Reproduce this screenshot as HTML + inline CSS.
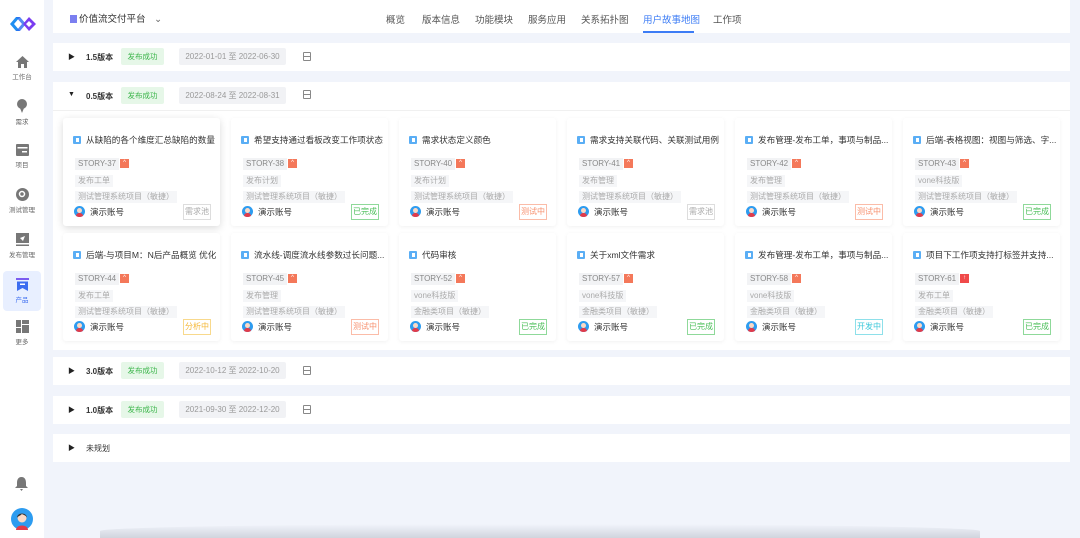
<!DOCTYPE html>
<html><head><meta charset="utf-8"><style>
*{margin:0;padding:0;box-sizing:border-box}
body{width:1080px;height:538px;overflow:hidden;background:#f1f4fb;font-family:"Liberation Sans","Noto Sans CJK SC",sans-serif;position:relative;color:#333}
.a{position:absolute}
.side{left:0;top:0;width:44px;height:538px;background:#fff}
.nav{position:absolute;left:0;width:44px;text-align:center;font-size:6.5px;color:#666}
.nav svg{display:block;margin:0 auto 3px}
.hdr{left:53px;top:0;width:1017px;height:33px;background:#fff}
.tab{position:absolute;top:12px;font-size:9.5px;color:#555}
.row{left:53px;width:1017px;background:#fff}
.tri{position:absolute;left:15px;font-size:7px;color:#222}
.ver{position:absolute;left:33px;font-size:8px;font-weight:bold;color:#333}
.ok{position:absolute;left:68px;width:43px;height:17px;background:#e6f7e8;color:#3bb54a;font-size:7.5px;line-height:17px;text-align:center;border-radius:2px}
.dt{position:absolute;left:126px;width:107px;height:17px;background:#f1f2f5;color:#999;font-size:8px;line-height:17px;text-align:center;border-radius:2px}
.ic{position:absolute;left:250px;width:8px;height:9px;border:1.2px solid #888;border-radius:1px}
.ic:after{content:"";position:absolute;left:0;right:0;top:3px;border-top:1.2px solid #888}
.card{position:absolute;width:157px;height:108px;background:#fff;border-radius:3px;box-shadow:0 1px 4px rgba(0,0,0,.06)}
.card.sel{box-shadow:0 2px 8px rgba(0,0,0,.15)}
.ti{position:absolute;left:10px;top:16px;font-size:8.6px;color:#333;white-space:nowrap}
.ti i{display:inline-block;width:8px;height:8px;background:#5aaef5;border-radius:1px;margin-right:5px;vertical-align:-1px;position:relative}
.ti i:after{content:"";position:absolute;left:2.5px;top:1.5px;width:3px;height:4px;background:#fff}
.st{position:absolute;left:12px;top:40px;height:12px;line-height:12px;padding:0 3px;background:#f2f3f5;color:#888;font-size:8px}
.pr{position:absolute;left:57px;top:41px;width:9px;height:9px;background:#f4785a;color:#fff;font-size:6px;line-height:9px;text-align:center}
.t1,.t2{position:absolute;left:12px;height:12px;line-height:12px;padding:0 3px;background:#f5f6f8;color:#aaa;font-size:8px}
.t1{top:57px}.t2{top:73px}
.us{position:absolute;left:11px;top:88px;font-size:8.5px;color:#333;line-height:12px}
.av{display:inline-block;width:11px;height:11px;border-radius:50%;background:#2d9cf0;vertical-align:-2px;margin-right:5px;position:relative;overflow:hidden}
.av:after{content:"";position:absolute;left:3px;top:2px;width:5px;height:5px;border-radius:50%;background:#fbd9c6}
.av:before{content:"";position:absolute;left:2px;top:7px;width:7px;height:5px;background:#e23b4a;border-radius:3px 3px 0 0}
.s{position:absolute;left:120px;top:86px;width:28px;height:16px;border:1px solid;font-size:8px;line-height:14px;text-align:center}
.g{color:#4cbf5a;border-color:#8fd99a}.o{color:#f7906e;border-color:#fbbca8}.x{color:#aaa;border-color:#ddd}.y{color:#f5b93a;border-color:#f8d98c}.c{color:#3dc8da;border-color:#8ee0ea}
</style></head><body>
<div class="a side">
<svg class="a" style="left:9px;top:16px" width="28" height="16" viewBox="0 0 28 16"><path d="M7 1 L1 8 L7 15 L11 15 L5 8 L11 1Z" fill="#1f8ef1"/><path d="M11 1 L17 8 L11 15 L7 15 L13 8 L7 1Z" fill="#2b6cf0" opacity=".8"/><path d="M20 1 L14 8 L20 15 L27 8Z M20 5 L23 8 L20 11 L17 8Z" fill="#7a3cf0" fill-rule="evenodd"/></svg>
<div class="nav" style="top:56px"><svg width="13" height="12" viewBox="0 0 13 12"><path d="M6.5 0 L13 6 H11 V12 H8 V8 H5 V12 H2 V6 H0Z" fill="#777"/></svg>工作台</div>
<div class="nav" style="top:99px"><svg width="10" height="14" viewBox="0 0 10 14"><circle cx="5" cy="5" r="5" fill="#777"/><path d="M3 9 L7 9 L5 14Z" fill="#777"/></svg>需求</div>
<div class="nav" style="top:144px"><svg width="13" height="12" viewBox="0 0 13 12"><rect width="13" height="12" rx="1" fill="#777"/><rect x="1.5" y="3" width="10" height="1.5" fill="#fff"/><rect x="6" y="7" width="5" height="1.5" fill="#fff"/></svg>项目</div>
<div class="nav" style="top:188px"><svg width="13" height="13" viewBox="0 0 13 13"><circle cx="6.5" cy="6.5" r="6.5" fill="#777"/><circle cx="6" cy="6" r="2.5" fill="none" stroke="#fff" stroke-width="1.5"/></svg>测试管理</div>
<div class="nav" style="top:233px"><svg width="13" height="13" viewBox="0 0 13 13"><rect width="13" height="10" fill="#777"/><rect y="11.5" width="13" height="1.5" fill="#777"/><path d="M4 5 L9 3 L7 8Z" fill="#fff"/></svg>发布管理</div>
<div class="a" style="left:3px;top:271px;width:38px;height:40px;background:#e8efff;border-radius:4px"></div>
<div class="nav" style="top:278px;color:#3c6df0"><svg width="13" height="13" viewBox="0 0 13 13"><rect width="13" height="2" fill="#7b5cf0"/><path d="M1 3.5 H12 V13 L6.5 10 L1 13Z" fill="#3c6df0"/><rect x="4" y="5.5" width="5" height="1.5" fill="#fff"/></svg>产品</div>
<div class="nav" style="top:320px"><svg width="13" height="13" viewBox="0 0 13 13"><rect width="5" height="7" fill="#777"/><rect y="8" width="5" height="5" fill="#777"/><rect x="6" width="7" height="4" fill="#777"/><rect x="6" y="5" width="7" height="8" fill="#777"/></svg>更多</div>
<svg class="a" style="left:15px;top:477px" width="13" height="14" viewBox="0 0 13 14"><path d="M6.5 0 C3 0 2 3 2 6 V9 L0 11 H13 L11 9 V6 C11 3 10 0 6.5 0Z M5 12 H8 L6.5 14Z" fill="#777"/></svg>
<svg class="a" style="left:11px;top:508px" width="22" height="22" viewBox="0 0 22 22"><circle cx="11" cy="11" r="11" fill="#2d9cf0"/><path d="M5 22 C5 16 17 16 17 22Z" fill="#e23b4a"/><circle cx="11" cy="10" r="4.5" fill="#fbd9c6"/><path d="M6 10 C6 4 16 4 16 10 C15 7 12 7 11 6 C9 8 7 8 6 10Z" fill="#333"/></svg>
</div>
<div class="a hdr">
<div class="a" style="left:17px;top:11px;font-size:9.5px;color:#333"><span style="display:inline-block;width:7px;height:8px;background:#7b7ff0;vertical-align:-1px;margin-right:2px"></span>价值流交付平台 <span style="margin-left:6px;color:#666">&#8964;</span></div>
<div class="tab" style="left:333px">概览</div>
<div class="tab" style="left:369px">版本信息</div>
<div class="tab" style="left:422px">功能模块</div>
<div class="tab" style="left:475px">服务应用</div>
<div class="tab" style="left:528px">关系拓扑图</div>
<div class="tab" style="left:590px;color:#3c7cf5">用户故事地图</div>
<div class="a" style="left:590px;top:31px;width:51px;height:2px;background:#3c7cf5"></div>
<div class="tab" style="left:660px">工作项</div>
</div>
<div class="a row" style="top:43px;height:28px"><span class="tri" style="top:9px">&#9654;</span><span class="ver" style="top:9px">1.5版本</span><span class="ok" style="top:5px">发布成功</span><span class="dt" style="top:5px">2022-01-01 至 2022-06-30</span><span class="ic" style="top:9px"></span></div>
<div class="a row" style="top:82px;height:268px"><span class="tri" style="top:9px">&#9660;</span><span class="ver" style="top:9px">0.5版本</span><span class="ok" style="top:5px">发布成功</span><span class="dt" style="top:5px">2022-08-24 至 2022-08-31</span><span class="ic" style="top:8px"></span>
<div class="a" style="left:0;top:28px;width:1017px;height:1px;background:#f0f0f0"></div></div>

<div class="card sel" style="left:63px;top:118px"><div class="ti"><i></i>从缺陷的各个维度汇总缺陷的数量</div><span class="st">STORY-37</span><span class="pr">^</span><span class="t1">发布工单</span><span class="t2">测试管理系统项目（敏捷）</span><div class="us"><span class="av"></span>演示账号</div><span class="s x">需求池</span></div>
<div class="card" style="left:231px;top:118px"><div class="ti"><i></i>希望支持通过看板改变工作项状态</div><span class="st">STORY-38</span><span class="pr">^</span><span class="t1">发布计划</span><span class="t2">测试管理系统项目（敏捷）</span><div class="us"><span class="av"></span>演示账号</div><span class="s g">已完成</span></div>
<div class="card" style="left:399px;top:118px"><div class="ti"><i></i>需求状态定义颜色</div><span class="st">STORY-40</span><span class="pr">^</span><span class="t1">发布计划</span><span class="t2">测试管理系统项目（敏捷）</span><div class="us"><span class="av"></span>演示账号</div><span class="s o">测试中</span></div>
<div class="card" style="left:567px;top:118px"><div class="ti"><i></i>需求支持关联代码、关联测试用例</div><span class="st">STORY-41</span><span class="pr">^</span><span class="t1">发布管理</span><span class="t2">测试管理系统项目（敏捷）</span><div class="us"><span class="av"></span>演示账号</div><span class="s x">需求池</span></div>
<div class="card" style="left:735px;top:118px"><div class="ti"><i></i>发布管理-发布工单，事项与制品...</div><span class="st">STORY-42</span><span class="pr">^</span><span class="t1">发布管理</span><span class="t2">测试管理系统项目（敏捷）</span><div class="us"><span class="av"></span>演示账号</div><span class="s o">测试中</span></div>
<div class="card" style="left:903px;top:118px"><div class="ti"><i></i>后端-表格视图：视图与筛选、字...</div><span class="st">STORY-43</span><span class="pr">^</span><span class="t1">vone科技版</span><span class="t2">测试管理系统项目（敏捷）</span><div class="us"><span class="av"></span>演示账号</div><span class="s g">已完成</span></div>

<div class="card" style="left:63px;top:233px"><div class="ti"><i></i>后端-与项目M：N后产品概览 优化</div><span class="st">STORY-44</span><span class="pr">^</span><span class="t1">发布工单</span><span class="t2">测试管理系统项目（敏捷）</span><div class="us"><span class="av"></span>演示账号</div><span class="s y">分析中</span></div>
<div class="card" style="left:231px;top:233px"><div class="ti"><i></i>流水线-调度流水线参数过长问题...</div><span class="st">STORY-45</span><span class="pr">^</span><span class="t1">发布管理</span><span class="t2">测试管理系统项目（敏捷）</span><div class="us"><span class="av"></span>演示账号</div><span class="s o">测试中</span></div>
<div class="card" style="left:399px;top:233px"><div class="ti"><i></i>代码审核</div><span class="st">STORY-52</span><span class="pr">^</span><span class="t1">vone科技版</span><span class="t2">金融类项目（敏捷）</span><div class="us"><span class="av"></span>演示账号</div><span class="s g">已完成</span></div>
<div class="card" style="left:567px;top:233px"><div class="ti"><i></i>关于xml文件需求</div><span class="st">STORY-57</span><span class="pr">^</span><span class="t1">vone科技版</span><span class="t2">金融类项目（敏捷）</span><div class="us"><span class="av"></span>演示账号</div><span class="s g">已完成</span></div>
<div class="card" style="left:735px;top:233px"><div class="ti"><i></i>发布管理-发布工单，事项与制品...</div><span class="st">STORY-58</span><span class="pr">^</span><span class="t1">vone科技版</span><span class="t2">金融类项目（敏捷）</span><div class="us"><span class="av"></span>演示账号</div><span class="s c">开发中</span></div>
<div class="card" style="left:903px;top:233px"><div class="ti"><i></i>项目下工作项支持打标签并支持...</div><span class="st">STORY-61</span><span class="pr" style="background:#f04a4a">&#8593;</span><span class="t1">发布工单</span><span class="t2">金融类项目（敏捷）</span><div class="us"><span class="av"></span>演示账号</div><span class="s g">已完成</span></div>

<div class="a row" style="top:357px;height:28px"><span class="tri" style="top:9px">&#9654;</span><span class="ver" style="top:9px">3.0版本</span><span class="ok" style="top:5px">发布成功</span><span class="dt" style="top:5px">2022-10-12 至 2022-10-20</span><span class="ic" style="top:9px"></span></div>
<div class="a row" style="top:396px;height:28px"><span class="tri" style="top:9px">&#9654;</span><span class="ver" style="top:9px">1.0版本</span><span class="ok" style="top:5px">发布成功</span><span class="dt" style="top:5px">2021-09-30 至 2022-12-20</span><span class="ic" style="top:9px"></span></div>
<div class="a row" style="top:434px;height:28px"><span class="tri" style="top:9px">&#9654;</span><span class="ver" style="top:9px;font-weight:normal">未规划</span></div>
<div class="a" style="left:100px;top:524px;width:880px;height:14px;background:linear-gradient(to bottom,rgba(210,214,224,0),rgba(200,204,214,.8));border-radius:50% 50% 0 0"></div>
</body></html>
